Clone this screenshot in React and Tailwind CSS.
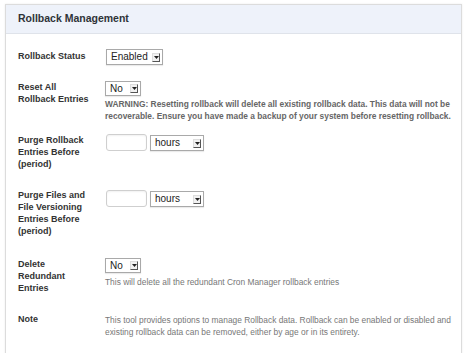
import React from 'react';

const font = { fontFamily: '"Liberation Sans", Arial, sans-serif' };

// old-style select box with the little arrow button
const FakeSelect = ({ value, width }) => (
  <div className={`flex items-center justify-between h-[16px] border border-[#a9a9a9] bg-white pl-[4px] pr-[2px] shadow-[0_1px_1px_rgba(0,0,0,0.08)] ${width}`}>
    <span className="text-[10px] leading-none text-[#222]">{value}</span>
    <span className="flex items-center justify-center w-[8px] h-[9px] bg-[#f1f1f1] border-r border-b border-[#555] border-l border-t border-l-[#ddd] border-t-[#ddd]">
      <svg width="5" height="3" viewBox="0 0 5 3">
        <path d="M0 0 L5 0 L2.5 3 Z" fill="#222" />
      </svg>
    </span>
  </div>
);

const Label = ({ lines }) => (
  <div className="w-[87px] shrink-0 text-[9px] leading-[12px] font-bold text-[#333]">
    {lines.map((l, i) => (
      <div key={i} className="whitespace-nowrap">{l}</div>
    ))}
  </div>
);

const TextInput = () => (
  <div className="w-[41px] h-[17px] rounded-[3px] border border-[#cfcfcf] bg-white shadow-[inset_0_1px_2px_rgba(0,0,0,0.06)]" />
);

export default function App() {
  return (
    <div className="w-[474px] h-[353px] bg-white overflow-hidden pt-[4px] pl-[5px]" style={font}>
      <div className="w-[457px] h-[400px] border border-[#dcdcdc] shadow-[0_0_2px_rgba(0,0,0,0.08)] bg-white">
        {/* header */}
        <div className="h-[29px] bg-[#eef2fa] border-b border-[#dfe3ea] flex items-center pl-[12px]">
          <h2 className="text-[10.5px] font-bold text-[#2f3338]">Rollback Management</h2>
        </div>

        <div className="pl-[12px]">
          {/* Rollback Status */}
          <div className="flex mt-[15px]">
            <div className="pt-[1px]"><Label lines={['Rollback Status']} /></div>
            <div className="pl-[1px]"><FakeSelect value="Enabled" width="w-[57px]" /></div>
          </div>

          {/* Reset */}
          <div className="flex mt-[16px]">
            <Label lines={['Reset All', 'Rollback Entries']} />
            <div className="flex flex-col">
              <div className="h-[15px] flex"><FakeSelect value="No" width="w-[36px] !h-[15px]" /></div>
              <div className="mt-[2px] text-[8.4px] leading-[12px] font-bold text-[#666]">
                <div className="whitespace-nowrap">WARNING: Resetting rollback will delete all existing rollback data. This data will not be</div>
                <div className="whitespace-nowrap">recoverable. Ensure you have made a backup of your system before resetting rollback.</div>
              </div>
            </div>
          </div>

          {/* Purge rollback */}
          <div className="flex mt-[12px]">
            <Label lines={['Purge Rollback', 'Entries Before', '(period)']} />
            <div className="flex items-start gap-[3px] pl-[1px]">
              <TextInput />
              <div className="mt-[1px]"><FakeSelect value="hours" width="w-[54px]" /></div>
            </div>
          </div>

          {/* Purge files */}
          <div className="flex mt-[19px]">
            <Label lines={['Purge Files and', 'File Versioning', 'Entries Before', '(period)']} />
            <div className="flex items-start gap-[3px] pl-[1px] pt-[1px]">
              <TextInput />
              <div className="mt-[1px]"><FakeSelect value="hours" width="w-[54px]" /></div>
            </div>
          </div>

          {/* Delete redundant */}
          <div className="flex mt-[21px]">
            <Label lines={['Delete', 'Redundant', 'Entries']} />
            <div className="flex flex-col">
              <div className="flex"><FakeSelect value="No" width="w-[36px] !h-[15px]" /></div>
              <div className="mt-[3px] text-[8.4px] leading-[12px] text-[#777] whitespace-nowrap">
                This will delete all the redundant Cron Manager rollback entries
              </div>
            </div>
          </div>

          {/* Note */}
          <div className="flex mt-[19px]">
            <Label lines={['Note']} />
            <div className="pt-[1px] text-[8.4px] leading-[12px] text-[#777]">
              <div className="whitespace-nowrap">This tool provides options to manage Rollback data. Rollback can be enabled or disabled and</div>
              <div className="whitespace-nowrap">existing rollback data can be removed, either by age or in its entirety.</div>
            </div>
          </div>
        </div>
      </div>
    </div>
  );
}
